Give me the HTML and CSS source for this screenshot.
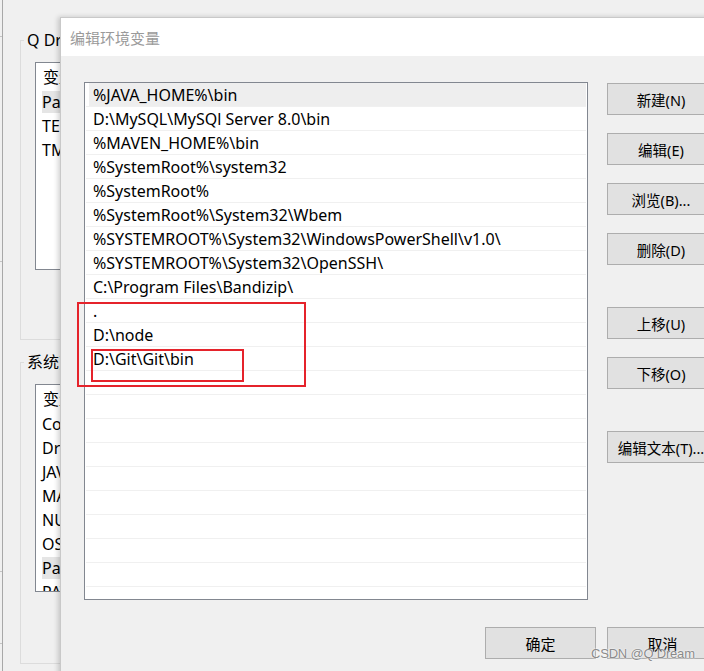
FILE: index.html
```html
<!DOCTYPE html>
<html lang="zh">
<head>
<meta charset="utf-8">
<title>编辑环境变量</title>
<link rel="stylesheet" href="styles.css">
</head>
<body>
<div class="bgwin">
  <div class="edge">
    <span class="seg s1"></span>
    <span class="seg s2"></span>
    <span class="seg s3"></span>
    <span class="seg s4"></span>
  </div>
  <div class="bgcontent">
    <div class="group g1">
      <span class="group-title">Q Dream 的用户变量(U)</span>
      <div class="vlist l1">
        <div class="vhead">变量</div>
        <div class="vrow sel">Path</div>
        <div class="vrow">TEMP</div>
        <div class="vrow">TMP</div>
      </div>
    </div>
    <div class="group g2">
      <span class="group-title">系统变量(S)</span>
      <div class="vlist l2">
        <div class="vhead">变量</div>
        <div class="vrow">ComSpec</div>
        <div class="vrow">DriverData</div>
        <div class="vrow">JAVA_HOME</div>
        <div class="vrow">MAVEN_HOME</div>
        <div class="vrow">NUMBER_OF_PROCESSORS</div>
        <div class="vrow">OS</div>
        <div class="vrow sel">Path</div>
        <div class="vrow">PATHEXT</div>
      </div>
    </div>
  </div>
</div>

<div class="dialog">
  <div class="titlebar">编辑环境变量</div>
  <div class="dlg-body">
    <div class="pathlist">
      <div class="prow sel"><span class="ptxt">%JAVA_HOME%\bin</span></div>
      <div class="prow"><span class="ptxt">D:\MySQL\MySQl Server 8.0\bin</span></div>
      <div class="prow"><span class="ptxt">%MAVEN_HOME%\bin</span></div>
      <div class="prow"><span class="ptxt">%SystemRoot%\system32</span></div>
      <div class="prow"><span class="ptxt">%SystemRoot%</span></div>
      <div class="prow"><span class="ptxt">%SystemRoot%\System32\Wbem</span></div>
      <div class="prow"><span class="ptxt">%SYSTEMROOT%\System32\WindowsPowerShell\v1.0\</span></div>
      <div class="prow"><span class="ptxt">%SYSTEMROOT%\System32\OpenSSH\</span></div>
      <div class="prow"><span class="ptxt">C:\Program Files\Bandizip\</span></div>
      <div class="prow"><span class="ptxt">.</span></div>
      <div class="prow"><span class="ptxt">D:\node</span></div>
      <div class="prow"><span class="ptxt">D:\Git\Git\bin</span></div>
      <div class="prow"><span class="ptxt"></span></div>
      <div class="prow"><span class="ptxt"></span></div>
      <div class="prow"><span class="ptxt"></span></div>
      <div class="prow"><span class="ptxt"></span></div>
      <div class="prow"><span class="ptxt"></span></div>
      <div class="prow"><span class="ptxt"></span></div>
      <div class="prow"><span class="ptxt"></span></div>
      <div class="prow"><span class="ptxt"></span></div>
      <div class="prow"><span class="ptxt"></span></div>
      <div class="prow"><span class="ptxt"></span></div>
    </div>
    <div class="side">
      <button class="btn">新建(N)</button>
      <button class="btn">编辑(E)</button>
      <button class="btn">浏览(B)...</button>
      <button class="btn">删除(D)</button>
      <button class="btn gap-top">上移(U)</button>
      <button class="btn">下移(O)</button>
      <button class="btn gap-top">编辑文本(T)...</button>
    </div>
  </div>
  <div class="footer">
    <button class="btn wide">确定</button>
    <button class="btn wide">取消</button>
  </div>
  <div class="mark outer"></div>
  <div class="mark inner"></div>
</div>

<div class="watermark">CSDN @Q Dream</div>
</body>
</html>
```

FILE: styles.css
```css
* { box-sizing: border-box; }

html, body {
  margin: 0;
  padding: 0;
}

body {
  width: 704px;
  height: 671px;
  overflow: hidden;
  position: relative;
  background: #f0f0f0;
  font-family: "Noto Sans", "Noto Sans CJK SC", sans-serif;
  font-size: 16px;
  color: #000;
}

/* ---------- background window ---------- */
.bgwin {
  display: flex;
  height: 671px;
}

.edge {
  width: 3px;
  height: 671px;
  border-right: 1px solid #a8a8a8;
  display: flex;
  flex-direction: column;
}

.seg {
  display: block;
  border-bottom: 1px solid #c4c4c4;
}
.s1 { height: 37px; }
.s2 { height: 225px; }
.s3 { height: 310px; }
.s4 { height: 72px; }

.bgcontent {
  padding-left: 17px;
  display: flex;
  flex-direction: column;
}

.group {
  width: 300px;
  border: 1px solid #dcdcdc;
  padding-left: 14px;
}

.g1 {
  margin-top: 40px;
  height: 300px;
}

.g2 {
  margin-top: 22px;
  height: 302px;
}

.group-title {
  display: block;
  width: max-content;
  margin-top: -11px;
  margin-left: -11px;
  padding: 0 3px;
  line-height: 20px;
  height: 20px;
  background: #f0f0f0;
  font-size: 16px;
}

.vlist {
  background: #fff;
  border: 1px solid #828790;
  margin-top: 12px;
  overflow: hidden;
  padding: 0 4px;
}

.l1 { height: 208px; }
.l2 { height: 208px; }

.vhead {
  height: 27px;
  line-height: 28px;
  padding-left: 3px;
}

.vrow {
  height: 24px;
  line-height: 25px;
  padding-left: 2px;
  white-space: nowrap;
}

.vrow.sel {
  background: #e5e5e5;
  background-clip: content-box;
  padding-top: 1px;
  padding-bottom: 1px;
  line-height: 23px;
}

/* ---------- dialog ---------- */
.dialog {
  position: absolute;
  left: 60px;
  top: 17px;
  width: 680px;
  height: 680px;
  background: #f0f0f0;
  border-left: 1px solid #c9c9c9;
  border-top: 1px solid #c9c9c9;
  box-shadow: -2px 0 5px rgba(0, 0, 0, 0.18);
}

.titlebar {
  height: 38px;
  background: #fff;
  padding-left: 9px;
  line-height: 39px;
  color: #9a9a9a;
  font-family: "Noto Sans CJK SC", sans-serif;
  font-size: 15px;
}

.dlg-body {
  display: grid;
  grid-template-columns: 504px 108px;
  column-gap: 19px;
  padding: 26px 0 0 23px;
}

.pathlist {
  height: 518px;
  background: #fff;
  border: 1px solid #828790;
  padding: 0 1px;
  overflow: hidden;
}

.prow {
  height: 24px;
  border-bottom: 1px solid #f0f0f0;
  display: flex;
  padding-left: 3px;
}

.ptxt {
  flex: 1;
  padding-left: 4px;
  line-height: 25px;
  white-space: nowrap;
}

.prow.sel .ptxt {
  background: #eeeeee;
}

.side {
  display: flex;
  flex-direction: column;
  padding-top: 1px;
  gap: 18px;
}

.btn {
  height: 32px;
  background: #e1e1e1;
  border: 1px solid #adadad;
  border-radius: 0;
  padding: 0;
  font-family: "Noto Sans", "Noto Sans CJK SC", sans-serif;
  font-size: 14.5px;
  color: #000;
  white-space: nowrap;
  overflow: hidden;
  flex: none;
}

.side .btn {
  width: 108px;
}

.gap-top {
  margin-top: 24px;
}

.footer {
  display: flex;
  gap: 11px;
  padding: 27px 0 0 424px;
}

.btn.wide {
  width: 111px;
  font-family: "Noto Sans CJK SC", sans-serif;
  font-size: 15px;
}

/* annotations */
.mark {
  position: absolute;
  border: 2px solid #e5232b;
}

.mark.outer {
  left: 16px;
  top: 284px;
  width: 229px;
  height: 85px;
}

.mark.inner {
  left: 30px;
  top: 331px;
  width: 153px;
  height: 33px;
}

.watermark {
  position: absolute;
  left: 591px;
  top: 646px;
  font-family: "Liberation Sans", sans-serif;
  font-size: 13px;
  color: #8a8a8a;
  text-shadow: 0 0 1px #fff, 0 0 2px #fff;
  letter-spacing: -0.2px;
}
```
